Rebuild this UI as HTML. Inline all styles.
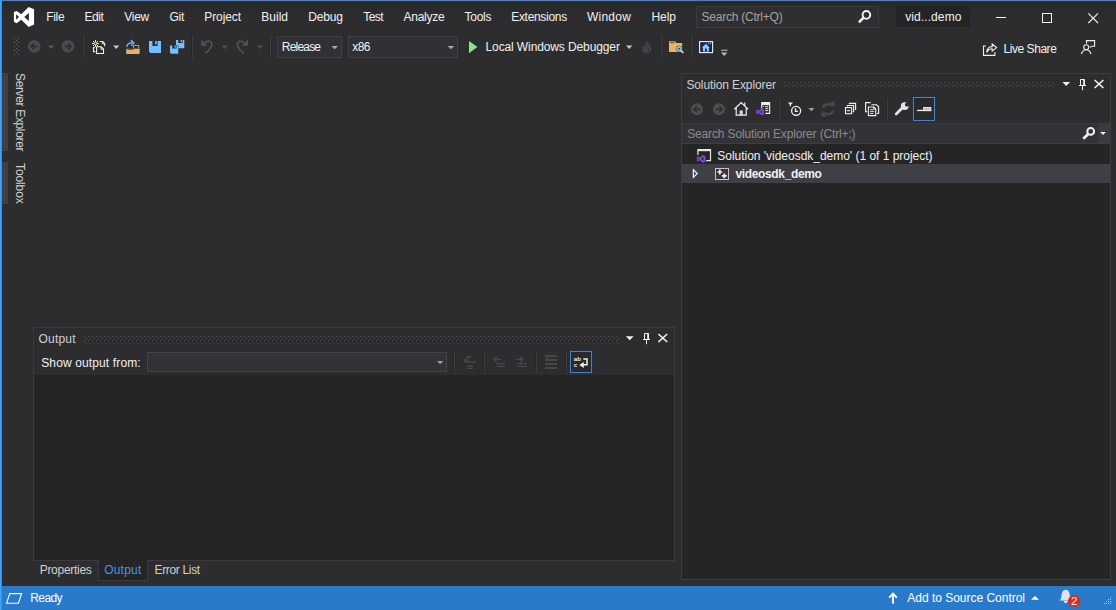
<!DOCTYPE html>
<html><head><meta charset="utf-8"><title>videosdk_demo - Microsoft Visual Studio</title>
<style>
html,body{margin:0;padding:0;}
body{width:1116px;height:610px;overflow:hidden;background:#2d2d30;position:relative;font-family:"Liberation Sans",sans-serif;font-size:12px;color:#f1f1f1;}
.a{position:absolute;}
.t{position:absolute;white-space:pre;line-height:15px;height:15px;font-family:"Liberation Sans",sans-serif;}
svg{position:absolute;overflow:visible;}
.box{position:absolute;box-sizing:border-box;}
.grip{position:absolute;height:5px;background-image:radial-gradient(circle at 0.5px 0.5px,#46464a 0.6px,transparent 0.7px),radial-gradient(circle at 0.5px 0.5px,#46464a 0.6px,transparent 0.7px);background-size:4px 4px,4px 4px;background-position:0 0,2px 2px;}
.sep{position:absolute;width:1px;background:#222224;border-right:1px solid #46464a;}
</style></head><body>
<!-- window frame -->
<div class="a" style="left:0;top:0;width:1116px;height:1px;background:#5880b4"></div>
<div class="a" style="left:0;top:1px;width:1116px;height:1px;background:#243148"></div>
<div class="a" style="left:0;top:0;width:1px;height:610px;background:#42a0f6"></div><div class="a" style="left:1px;top:0;width:1px;height:610px;background:#3a90e2"></div>

<div class="a" style="left:2px;top:2px;width:1114px;height:16px;background:linear-gradient(to bottom,rgba(30,34,40,0.55),rgba(38,38,42,0.35) 45%,rgba(45,45,48,0))"></div>
<!-- top search box -->
<div class="box" style="left:696px;top:6px;width:183px;height:22px;background:#2f2f32;border:1px solid #3b3b3f"></div>
<!-- solution name label -->
<div class="box" style="left:896px;top:6px;width:74px;height:21px;background:#242426"></div>

<!-- toolbar combos -->
<div class="box" style="left:277px;top:36px;width:65px;height:22px;background:#313135;border:1px solid #3f3f43"></div>
<div class="box" style="left:348px;top:36px;width:110px;height:22px;background:#313135;border:1px solid #3f3f43"></div>

<!-- left autohide tabs -->
<div class="a" style="left:2px;top:73px;width:6px;height:78px;background:#3f3f46"></div>
<div class="a" style="left:2px;top:162px;width:6px;height:42px;background:#3f3f46"></div>
<div class="t" style="left:12px;top:73px;transform-origin:0 0;transform:translate(15px,0) rotate(90deg);color:#d0d0d0;letter-spacing:-0.35px">Server Explorer</div>
<div class="t" style="left:12px;top:163px;transform-origin:0 0;transform:translate(15px,0) rotate(90deg);color:#d0d0d0;letter-spacing:-0.1px">Toolbox</div>

<!-- Solution Explorer panel -->
<div class="box" style="left:681px;top:73px;width:430px;height:507px;background:#252526;border:1px solid #3d3d41"></div>
<div class="a" style="left:682px;top:74px;width:428px;height:49px;background:#2d2d30"></div>
<div class="a" style="left:682px;top:123px;width:428px;height:21px;background:#333337;border-top:1px solid #39393d;border-bottom:1px solid #3e3e42;box-sizing:border-box"></div>
<div class="a" style="left:682px;top:164px;width:428px;height:19px;background:#3f3f46"></div>
<div class="box" style="left:913px;top:97px;width:22px;height:24px;border:1px solid #4681c2;background:#2a2a2d;box-shadow:0 0 0 1px rgba(20,60,110,0.45)"></div>

<!-- Output panel -->
<div class="box" style="left:33px;top:327px;width:642px;height:234px;background:#252526;border:1px solid #3b3b3f"></div>
<div class="a" style="left:34px;top:328px;width:640px;height:47px;background:#2d2d30"></div>
<div class="box" style="left:147px;top:352px;width:300px;height:20px;background:#333337;border:1px solid #434346"></div>
<div class="box" style="left:570px;top:351px;width:22px;height:22px;border:1px solid #4681c2;background:#2a2a2d;box-shadow:0 0 0 1px rgba(20,60,110,0.45)"></div>
<!-- output tab -->
<div class="a" style="left:98px;top:560px;width:50px;height:21px;background:#252526;border:1px solid #3b3b3f;border-top:none;box-sizing:border-box"></div>

<!-- status bar -->
<div class="a" style="left:2px;top:585px;width:1114px;height:1px;background:#262c38"></div>
<div class="a" style="left:2px;top:586px;width:1114px;height:24px;background:#2a7acb"></div>

<span class="t" style="left:46.2px;top:9.5px;font-size:12px;color:#f1f1f1;font-weight:400;letter-spacing:-0.286px;">File</span>
<span class="t" style="left:84.4px;top:9.5px;font-size:12px;color:#f1f1f1;font-weight:400;letter-spacing:-0.372px;">Edit</span>
<span class="t" style="left:124.3px;top:9.5px;font-size:12px;color:#f1f1f1;font-weight:400;letter-spacing:-0.274px;">View</span>
<span class="t" style="left:169.4px;top:9.5px;font-size:12px;color:#f1f1f1;font-weight:400;letter-spacing:-0.248px;">Git</span>
<span class="t" style="left:204.3px;top:9.5px;font-size:12px;color:#f1f1f1;font-weight:400;letter-spacing:-0.108px;">Project</span>
<span class="t" style="left:261.3px;top:9.5px;font-size:12px;color:#f1f1f1;font-weight:400;letter-spacing:0.002px;">Build</span>
<span class="t" style="left:308.2px;top:9.5px;font-size:12px;color:#f1f1f1;font-weight:400;letter-spacing:-0.155px;">Debug</span>
<span class="t" style="left:363.2px;top:9.5px;font-size:12px;color:#f1f1f1;font-weight:400;letter-spacing:-0.554px;">Test</span>
<span class="t" style="left:403.5px;top:9.5px;font-size:12px;color:#f1f1f1;font-weight:400;letter-spacing:-0.258px;">Analyze</span>
<span class="t" style="left:464.6px;top:9.5px;font-size:12px;color:#f1f1f1;font-weight:400;letter-spacing:-0.303px;">Tools</span>
<span class="t" style="left:511.2px;top:9.5px;font-size:12px;color:#f1f1f1;font-weight:400;letter-spacing:-0.300px;">Extensions</span>
<span class="t" style="left:587.0px;top:9.5px;font-size:12px;color:#f1f1f1;font-weight:400;letter-spacing:0.235px;">Window</span>
<span class="t" style="left:651.5px;top:9.5px;font-size:12px;color:#f1f1f1;font-weight:400;letter-spacing:-0.047px;">Help</span>
<span class="t" style="left:701.6px;top:9.5px;font-size:12px;color:#a2a2a2;font-weight:400;letter-spacing:-0.237px;">Search (Ctrl+Q)</span>
<span class="t" style="left:905.2px;top:9.5px;font-size:12px;color:#f1f1f1;font-weight:400;letter-spacing:0.094px;">vid...demo</span>
<span class="t" style="left:281.8px;top:39.8px;font-size:12px;color:#f1f1f1;font-weight:400;letter-spacing:-0.804px;">Release</span>
<span class="t" style="left:352.2px;top:39.8px;font-size:12px;color:#f1f1f1;font-weight:400;letter-spacing:-0.553px;">x86</span>
<span class="t" style="left:485.5px;top:39.8px;font-size:12px;color:#f1f1f1;font-weight:400;letter-spacing:-0.111px;">Local Windows Debugger</span>
<span class="t" style="left:1003.5px;top:42.1px;font-size:12px;color:#f1f1f1;font-weight:400;letter-spacing:-0.447px;">Live Share</span>
<span class="t" style="left:686.4px;top:78.4px;font-size:12px;color:#d0d0d0;font-weight:400;letter-spacing:-0.111px;">Solution Explorer</span>
<span class="t" style="left:687.2px;top:126.7px;font-size:12px;color:#8a8a8d;font-weight:400;letter-spacing:-0.145px;">Search Solution Explorer (Ctrl+;)</span>
<span class="t" style="left:717.3px;top:149.3px;font-size:12px;color:#f1f1f1;font-weight:400;letter-spacing:-0.021px;">Solution &#x27;videosdk_demo&#x27; (1 of 1 project)</span>
<span class="t" style="left:735.4px;top:167.3px;font-size:12px;color:#f1f1f1;font-weight:700;letter-spacing:-0.346px;">videosdk_demo</span>
<span class="t" style="left:38.5px;top:332.3px;font-size:12px;color:#d0d0d0;font-weight:400;letter-spacing:0.195px;">Output</span>
<span class="t" style="left:41.2px;top:356.4px;font-size:12px;color:#f1f1f1;font-weight:400;letter-spacing:0.130px;">Show output from:</span>
<span class="t" style="left:39.7px;top:563.3px;font-size:12px;color:#d0d0d0;font-weight:400;letter-spacing:-0.290px;">Properties</span>
<span class="t" style="left:104.2px;top:563.3px;font-size:12px;color:#4892e6;font-weight:400;letter-spacing:0.211px;">Output</span>
<span class="t" style="left:154.5px;top:563.3px;font-size:12px;color:#d0d0d0;font-weight:400;letter-spacing:-0.339px;">Error List</span>
<span class="t" style="left:30.3px;top:591.3px;font-size:12px;color:#ffffff;font-weight:400;letter-spacing:-0.618px;">Ready</span>
<span class="t" style="left:907.3px;top:591.3px;font-size:12px;color:#ffffff;font-weight:400;letter-spacing:-0.018px;">Add to Source Control</span>
<svg class="a" style="left:0;top:0" width="1116" height="610" viewBox="0 0 1116 610">
<!-- VS logo -->
<path fill="#ffffff" fill-rule="evenodd" d="M28.65 6.9 L34.06 9.37 V24.6 L28.65 27.07 L21.27 19.7 L16.6 23.2 L13.9 21.67 V12.08 L16.6 10.9 L21.27 14.3 Z M16.1 14.3 V19.7 L19.06 17 Z M28.9 13.06 V20.9 L24.2 17 Z"/>

<!-- top search magnifier -->
<g stroke="#f1f1f1" fill="none"><circle cx="866.4" cy="14.9" r="3.8" stroke-width="2"/><path d="M863.6 17.7 L858.9 22.4" stroke-width="2.6" stroke-linecap="butt"/></g>

<!-- window controls -->
<g stroke="#f1f1f1" stroke-width="1" fill="none">
<path d="M996 17.5 H1006"/>
<rect x="1042.5" y="13.5" width="9" height="9"/>
<path d="M1088.3 13.3 L1098 23 M1098 13.3 L1088.3 23" stroke-width="1.1"/>
</g>

<!-- main toolbar grip -->
<g fill="#66666a">
<rect x="14" y="38" width="1" height="1"/><rect x="18" y="38" width="1" height="1"/><rect x="16" y="40" width="1" height="1"/>
<rect x="14" y="42" width="1" height="1"/><rect x="18" y="42" width="1" height="1"/><rect x="16" y="44" width="1" height="1"/>
<rect x="14" y="46" width="1" height="1"/><rect x="18" y="46" width="1" height="1"/><rect x="16" y="48" width="1" height="1"/>
<rect x="14" y="50" width="1" height="1"/><rect x="18" y="50" width="1" height="1"/><rect x="16" y="52" width="1" height="1"/>
<rect x="14" y="54" width="1" height="1"/><rect x="18" y="54" width="1" height="1"/>
</g>
<!-- back / forward disabled -->
<g>
<circle cx="34.2" cy="46.4" r="6.3" fill="#4a4a4e"/><path d="M37.5 46.4 H31.5 M34 43.6 L31.2 46.4 L34 49.2" stroke="#2d2d30" stroke-width="1.6" fill="none"/>
<path d="M48 45.5 h6 l-3 3.2 z" fill="#5a5a5e"/>
<circle cx="68" cy="46.4" r="6.3" fill="#4a4a4e"/><path d="M64.7 46.4 H70.7 M68.2 43.6 L71 46.4 L68.2 49.2" stroke="#2d2d30" stroke-width="1.6" fill="none"/>
</g>
<!-- separators main toolbar -->
<rect x="82" y="35" width="1" height="23" fill="#27272a"/><rect x="83" y="35" width="1" height="23" fill="#3d3d41"/>
<rect x="191" y="35" width="1" height="23" fill="#27272a"/><rect x="192" y="35" width="1" height="23" fill="#3d3d41"/>
<rect x="269" y="35" width="1" height="23" fill="#27272a"/><rect x="270" y="35" width="1" height="23" fill="#3d3d41"/>
<rect x="660" y="36" width="1" height="22" fill="#27272a"/><rect x="661" y="36" width="1" height="22" fill="#3d3d41"/>
<rect x="690" y="36" width="1" height="22" fill="#27272a"/><rect x="691" y="36" width="1" height="22" fill="#3d3d41"/>
<!-- new project -->
<g fill="none" stroke="#f1f1f1" stroke-width="1.1">
<path d="M99.8 41.5 H102.6 L104.7 43.6 V46.2"/><path d="M102.4 41.5 V43.8 H104.7" stroke-width="0.9"/>
<path d="M96.6 46.8 H101.2 L103.5 49.1 V53.5 H96.6 Z"/><path d="M101 46.8 V49.3 H103.5" stroke-width="0.9"/>
<path d="M94.8 47.6 H93.5 V51.6 H95.3"/>
</g>
<g stroke="#f4ef9e" stroke-width="1" fill="none">
<path d="M95.5 40 v2.1 M95.5 44.9 v2.1 M92 43.5 h2.1 M96.9 43.5 h2.1 M93 41 l1.5 1.5 M96.5 44.5 l1.5 1.5 M98 41 l-1.5 1.5 M94.5 44.5 l-1.500 1.5"/>
<circle cx="95.5" cy="43.5" r="1.3"/>
</g>
<path d="M113 45.5 h6.4 l-3.2 3.4 z" fill="#c8c8c8"/>
<!-- open folder -->
<g>
<path d="M133.4 48 V45.4 H138.7 V48.6" fill="none" stroke="#cfa868" stroke-width="0.9"/>
<path d="M126.2 48.7 H139.7 V53 Q139.7 53.9 138.8 53.9 H127.1 Q126.2 53.9 126.2 53 Z" fill="#e2b468"/>
<rect x="127.3" y="48.7" width="6" height="1" fill="#3a3428"/>
<path d="M127 47 C126.8 44 129.5 42.600 132.800 42.800" fill="none" stroke="#5cb3ff" stroke-width="1.5"/>
<path d="M130.800 40 L133.800 42.900 L131.200 45.800" fill="none" stroke="#5cb3ff" stroke-width="1.5"/>
</g>
<!-- save -->
<path fill="#75beff" fill-rule="evenodd" d="M149 41 H161 V53 H150.5 L149 51.5 Z M152.4 41 V46 H157.7 V41 Z"/>
<rect x="155.2" y="41" width="1.7" height="3.4" fill="#75beff"/>
<!-- save all -->
<path fill="#75beff" fill-rule="evenodd" d="M176 40 H184.3 V48.2 H178.6 V45.3 H176 Z M178.2 40 V43 H182.6 V40 Z"/>
<rect x="180.6" y="40" width="1.3" height="2" fill="#75beff"/>
<path fill="#75beff" fill-rule="evenodd" d="M170 45.6 H178.3 V53.8 H171 L170 52.8 Z M172.2 45.6 V48.6 H176.6 V45.6 Z"/>
<rect x="174.6" y="45.6" width="1.3" height="2" fill="#75beff"/>
<!-- undo / redo disabled -->
<g fill="none" stroke="#515155" stroke-width="1.7">
<path d="M203.500 44.800 C205.500 41.200 209 40 211 42.200 C213.300 45 210.500 49.500 205.300 53.300"/>
<path d="M245.7 44.800 C243.7 41.200 240.2 40 238.2 42.200 C235.9 45 238.7 49.500 243.9 53.300"/>
</g>
<path d="M201.200 39.400 V45.800 H207.600 Z" fill="#515155"/>
<path d="M248.0 39.400 V45.800 H241.6 Z" fill="#515155"/>
<path d="M221.6 45.6 h6.4 l-3.2 3.4 z" fill="#505054"/>
<path d="M257 45.6 h6.4 l-3.2 3.4 z" fill="#505054"/>
<!-- combo arrows -->
<path d="M331.4 46 h6.6 l-3.3 3.3 z" fill="#a8a8a8"/>
<path d="M447.6 46 h6.6 l-3.3 3.3 z" fill="#a8a8a8"/>
<!-- play -->
<path d="M469 41 L477.4 47.1 L469 53.2 Z" fill="#8ae28a"/>
<path d="M626 45.6 h6.4 l-3.2 3.4 z" fill="#c8c8c8"/>
<!-- flame disabled -->
<path d="M646.5 40.8 C649 44 651.3 46.5 651.3 49.5 C651.3 52 649.3 53.3 646.8 53.3 C644 53.3 642.2 51.8 642.2 49.3 C642.2 47.5 643.3 46 644.3 44.8 C644.5 46.3 645 47 645.7 47.3 C645.3 45 645.5 42.8 646.5 40.8 Z" fill="#434347"/>
<path d="M646.8 45.5 C648.2 47.5 649 49 648.4 51.2" fill="none" stroke="#323236" stroke-width="0.9"/>
<!-- find in files folder -->
<path d="M669 41.200 H675 L676.600 43 H682.2 V52.100 H669 Z" fill="#e6b462"/>
<rect x="670" y="42.3" width="4.6" height="0.800" fill="#3a3020"/>
<circle cx="679.2" cy="48.8" r="1.800" fill="#1d5fa3" stroke="#8cc4f8" stroke-width="1.300"/>
<circle cx="679.2" cy="48.8" r="3" fill="none" stroke="#2d2d30" stroke-width="0.800" opacity="0.600"/>
<path d="M680.800 50.500 L683.300 52.900" stroke="#d5e4f5" stroke-width="1.600"/>
<!-- home window -->
<rect x="699.6" y="41.600" width="13" height="11" fill="#14284a" stroke="#f1f1f1" stroke-width="1.1"/>
<path d="M701.8 47.700 L705.900 43.700 L710 47.700 H708.900 V51.400 H702.900 V47.700 Z" fill="#8fc6ff"/>
<rect x="705" y="48.600" width="1.800" height="2.800" fill="#14284a"/>
<rect x="708.2" y="42.900" width="1" height="1" fill="#f1f1f1"/><rect x="710.2" y="42.900" width="1" height="1" fill="#f1f1f1"/>
<!-- overflow -->
<rect x="721" y="49.7" width="6.4" height="1.1" fill="#b8b8b8"/><path d="M721 52.600 h6.4 l-3.2 3.5 z" fill="#b8b8b8"/>

<!-- live share -->
<g fill="none" stroke="#f1f1f1" stroke-width="1.1">
<path d="M986 46 H983.5 V55.4 H994.9 V52"/>
<path d="M986.8 52.6 C987 48.5 989.5 46.6 992.2 46.6 V44 L996.6 47.6 L992.2 51.2 V48.8 C990 48.8 988 50 986.8 52.6 Z"/>
</g>
<!-- feedback -->
<g fill="none" stroke="#f1f1f1" stroke-width="1.1">
<circle cx="1086.2" cy="47.2" r="2.5"/>
<path d="M1081.4 54 C1082.5 50.6 1084.5 49.8 1086.2 49.8 C1087.9 49.8 1089.9 50.6 1091 54"/>
<path d="M1086.5 43.4 V40.6 H1094.6 V46.2 H1091.5 L1089.8 47.6"/>
</g>
</svg>

<svg class="a" style="left:0;top:0" width="1116" height="610" viewBox="0 0 1116 610">
<defs>
<pattern id="gp1" x="784" y="82" width="4" height="4" patternUnits="userSpaceOnUse"><rect x="0" y="0" width="1" height="1" fill="#4f4f54"/><rect x="2" y="2" width="1" height="1" fill="#4f4f54"/></pattern>
<pattern id="gp2" x="84" y="336" width="4" height="4" patternUnits="userSpaceOnUse"><rect x="0" y="0" width="1" height="1" fill="#4f4f54"/><rect x="2" y="2" width="1" height="1" fill="#4f4f54"/></pattern>
<pattern id="gp3" x="84" y="340" width="4" height="4" patternUnits="userSpaceOnUse"><rect x="0" y="0" width="1" height="1" fill="#47474b"/><rect x="0" y="3" width="1" height="1" fill="#3d3d41"/><rect x="2" y="3" width="1" height="1" fill="#3d3d41"/></pattern>
</defs>
<rect x="784" y="82" width="271" height="5" fill="url(#gp1)"/>
<rect x="84" y="336" width="535" height="3" fill="url(#gp2)"/>
<rect x="84" y="340" width="535" height="4" fill="url(#gp3)"/>
<!-- ===== Solution Explorer title buttons ===== -->
<path d="M1062.4 82 h7.6 l-3.8 4 z" fill="#f1f1f1"/>
<g fill="none" stroke="#f1f1f1" stroke-width="1"><path d="M1080.5 85 V79.5 H1084.5 V85 M1079 85.5 H1086 M1082.5 86 V90.2"/><path d="M1084 79.5 V85" stroke-width="1.6"/></g>
<path d="M1094.6 80 L1103.4 88 M1103.4 80 L1094.6 88" stroke="#f1f1f1" stroke-width="1.65" fill="none"/>
<!-- SE toolbar -->
<circle cx="697" cy="109.2" r="6" fill="#4d4d50"/><path d="M700.3 109.2 H694.3 M696.8 106.4 L694 109.2 L696.8 112" stroke="#2d2d30" stroke-width="1.5" fill="none"/>
<circle cx="719" cy="109.2" r="6" fill="#4d4d50"/><path d="M715.7 109.2 H721.7 M719.2 106.4 L722 109.2 L719.2 112" stroke="#2d2d30" stroke-width="1.5" fill="none"/>
<!-- home -->
<g fill="none" stroke="#f1f1f1" stroke-width="1.2">
<path d="M734.3 109.3 L741.2 102.6 L748.1 109.3"/>
<path d="M736.2 108 V115.2 H746.2 V108"/>
<path d="M744.8 105.5 V102.6"/>
</g>
<rect x="739.6" y="110.4" width="3.2" height="4.800" fill="#d4d4d4"/>
<!-- solution/file view icon -->
<rect x="761.2" y="102" width="9" height="3.1" fill="#f1f1f1"/>
<path d="M761.7 105 V108.6 M769.65 105 V113.4 H765.4" fill="none" stroke="#f1f1f1" stroke-width="1.1"/>
<path d="M765.2 106.6 h3 M765.2 108.6 h3 M765.2 110.6 h3" stroke="#f1f1f1" stroke-width="0.9"/>
<rect x="763.1" y="106.1" width="0.9" height="0.9" fill="#e0e0e0"/>
<path fill="#7c47cb" fill-rule="evenodd" d="M761.6 108 L763.9 109 V114.6 L761.6 115.6 L758.9 113 L757.2 114.2 L756.1 113.6 V110 L757.2 109.4 L758.9 110.6 Z M757 110.9 V112.7 L758 111.8 Z M762 110.3 V113.3 L760.2 111.8 Z"/>
<rect x="778" y="99" width="1" height="20" fill="#27272a"/><rect x="779" y="99" width="1" height="20" fill="#3d3d41"/>
<!-- pending changes filter -->
<path d="M787.8 102.4 h5.2 l-2 2.2 v1.6 h-1.2 v-1.6 z" fill="#f1f1f1"/>
<circle cx="796.1" cy="110.8" r="4.5" fill="none" stroke="#f1f1f1" stroke-width="1.3"/>
<path d="M795.5 108.2 V111.4 H797.9" fill="none" stroke="#f1f1f1" stroke-width="1.3"/>
<path d="M808.4 108.1 h6 l-3 3.1 z" fill="#a0a0a0"/>
<!-- sync disabled -->
<g fill="none" stroke="#48484c" stroke-width="2.4">
<path d="M823 108 C823.5 104.5 828 103 832 105.5"/>
<path d="M833.2 110.5 C832.7 114 828.2 115.5 824.2 113"/>
</g>
<path d="M829.5 102 L835 101.6 L834.4 108 Z" fill="#48484c"/>
<path d="M826.7 116.6 L821.2 117 L821.8 110.6 Z" fill="#48484c"/>
<!-- collapse all -->
<g fill="none" stroke="#f1f1f1" stroke-width="1.1">
<rect x="845.5" y="107.6" width="6.1" height="6.1"/>
<path d="M847.4 106.4 V105.5 H853.6 V111.600 H852.8"/>
<path d="M849.4 104.300 V103.4 H855.600 V109.5 H854.8"/>
<path d="M847 110.65 H850.1"/>
</g>
<!-- show all files -->
<g fill="none" stroke="#f1f1f1" stroke-width="1.1">
<path d="M870.6 102.600 H865.6 V111.600 H867.2"/>
<path d="M871.4 104.8 H876.6 L878.6 106.8 V113.5 H877"/>
<path d="M868.4 107 H873.8 L875.8 109 V115.600 H868.4 Z"/>
<path d="M873.600 107 V109.2 H875.8" stroke-width="0.8"/>
<path d="M870.2 109.7 h3 M870.2 111.600 h4 M870.2 113.5 h3" stroke-width="0.9"/>
</g>
<rect x="886" y="99" width="1" height="21" fill="#27272a"/><rect x="887" y="99" width="1" height="21" fill="#3d3d41"/>
<!-- wrench -->
<path d="M896.2 114 L902.4 107.800" stroke="#e4e4e4" stroke-width="2.7" stroke-linecap="round" fill="none"/>
<circle cx="904.7" cy="106.100" r="3.9" fill="#e4e4e4"/>
<path d="M904.9 104.100 L908.6 100.400 L911.2 103 L907.5 106.700 L905.3 106.300 Z" fill="#2d2d30"/>
<!-- preview selected -->
<rect x="917" y="109.8" width="14.3" height="1.3" fill="#f1f1f1"/>
<rect x="923.1" y="107" width="8.2" height="4.1" fill="#e4e4e4"/><rect x="924.2" y="108" width="6" height="1.8" fill="#bdbdbd"/>
<!-- SE search icons -->
<rect x="1098.5" y="124" width="11" height="19" fill="#3a3a3f"/>
<circle cx="1090.7" cy="131.4" r="3.4" fill="none" stroke="#f1f1f1" stroke-width="2"/>
<path d="M1088.2 133.900 L1083.300 138.800" stroke="#f1f1f1" stroke-width="2.8" fill="none"/>
<path d="M1100.2 132 h5.6 l-2.8 3 z" fill="#f1f1f1"/>
<!-- tree icons -->
<g>
<rect x="697.3" y="149" width="13.8" height="2.2" fill="#e6e6e6"/>
<path d="M697.9 151 V155 M710.5 151 V160.6 H706.2" fill="none" stroke="#e6e6e6" stroke-width="1.2"/>
<path fill="#7c47cb" fill-rule="evenodd" d="M702.8 154.8 L705.5 156 V161.8 L702.8 163 L699.9 160.2 L698 161.6 L696.8 161 V156.8 L698 156.2 L699.9 157.6 Z M697.8 157.9 V159.9 L699 158.9 Z M703.4 157 V160.8 L701.2 158.9 Z"/>
<path d="M693.4 169.700 L697.2 173.5 L693.4 177.300 Z" fill="none" stroke="#f1f1f1" stroke-width="1.2"/>
<rect x="715.5" y="168.5" width="13" height="11" fill="#39363b" stroke="#d3bcd2" stroke-width="1"/>
<path d="M717.4 172 h4.8 M719.8 169.6 v4.8 M721.9 175.8 h4.800 M724.3 173.4 v4.800" stroke="#f1f1f1" stroke-width="1.7" fill="none"/>
</g>

<!-- ===== Output panel title buttons ===== -->
<path d="M625.8 336.2 h7.8 l-3.9 4 z" fill="#f1f1f1"/>
<g fill="none" stroke="#f1f1f1" stroke-width="1"><path d="M644.5 339 V333.5 H648.5 V339 M643 339.5 H650 M646.5 340 V344.2"/><path d="M648 333.5 V339" stroke-width="1.6"/></g>
<path d="M658.4 334 L667.2 342 M667.2 334 L658.4 342" stroke="#f1f1f1" stroke-width="1.65" fill="none"/>
<!-- output toolbar -->
<path d="M437 361 h6.4 l-3.2 3.2 z" fill="#999999"/>
<rect x="453" y="352" width="1" height="20" fill="#27272a"/><rect x="454" y="352" width="1" height="20" fill="#3d3d41"/>
<rect x="483" y="352" width="1" height="20" fill="#27272a"/><rect x="484" y="352" width="1" height="20" fill="#3d3d41"/>
<rect x="535" y="352" width="1" height="20" fill="#27272a"/><rect x="536" y="352" width="1" height="20" fill="#3d3d41"/>
<rect x="565" y="352" width="1" height="20" fill="#27272a"/><rect x="566" y="352" width="1" height="20" fill="#3d3d41"/>

<g stroke="#47474b" fill="none" stroke-width="1.4">
<!-- icon1: go to -->
<path d="M464 362 H476 M467 366 H473 M467 368.4 H473"/>
<path d="M466 359.5 C466 356.5 469.5 355.5 471 357.5" />
<path d="M464 359.2 l2.2 2.4 l2.2 -2.4" />
<!-- icon2 prev -->
<path d="M494 359.4 H501 M497 356.4 L494 359.4 L497 362.4 M496.5 363.6 H505 M496.5 366.4 H505"/>
<!-- icon3 next -->
<path d="M523 359.4 H516 M520 356.4 L523 359.4 L520 362.4 M517.5 363.6 H527 M517.5 366.4 H527"/>
<!-- icon4 clear all -->
<path d="M545 356 H557 M545 360 H557 M545 364 H557 M545 368 H557" stroke-width="1.8"/>
<path d="M544.5 355 L549.5 360" stroke-width="1.2"/>
</g>
<!-- word wrap icon -->
<g fill="#f1f1f1" font-family="Liberation Sans, sans-serif" font-weight="700" font-size="6.2px">
<text x="573.7" y="360.7" letter-spacing="0.2">ab</text><text x="573.7" y="366.9">c</text>
</g>
<path d="M583.3 359 H587 V364.8 H583" fill="none" stroke="#f1f1f1" stroke-width="1.5"/>
<path d="M583.8 361.9 L579.3 364.9 L583.8 367.9 Z" fill="#f1f1f1"/>

<!-- ===== Status bar ===== -->
<path d="M9.8 593.6 H21.6 L18.4 603.2 H6.6 Z" fill="none" stroke="#ffffff" stroke-width="1.1"/>
<path d="M893 603.8 V594 M889.2 597.6 L893 593.6 L896.8 597.6" fill="none" stroke="#ffffff" stroke-width="1.8"/>
<path d="M1031 599.8 h8 l-4 -3.8 z" fill="#ffffff"/>
<path d="M1059.8 600.4 C1061.8 598.6 1061.2 595 1062.200 592.600 C1063 590.5 1064.5 589.8 1065.700 589.8 C1066.900 589.8 1068.400 590.5 1069.200 592.600 C1070.200 595 1069.600 598.600 1071.600 600.4 Z" fill="#dde4ee"/>
<path d="M1063.6 600.8 h4.2 a2.1 2.4 0 0 1 -4.2 0 z" fill="#dde4ee"/>
<circle cx="1074.1" cy="601" r="6.1" fill="#dc2a1c"/>
<text x="1070.900" y="605.100" fill="#ffffff" font-family="Liberation Sans, sans-serif" font-size="11.5px">2</text>
<g fill="#a9cdf2">
<rect x="1110" y="597" width="1" height="1"/>
<rect x="1108" y="599" width="1" height="1"/><rect x="1110" y="599" width="1" height="1"/>
<rect x="1106" y="601" width="1" height="1"/><rect x="1108" y="601" width="1" height="1"/><rect x="1110" y="601" width="1" height="1"/>
<rect x="1104" y="603" width="1" height="1"/><rect x="1106" y="603" width="1" height="1"/><rect x="1108" y="603" width="1" height="1"/><rect x="1110" y="603" width="1" height="1"/>
</g>
</svg>

</body></html>
